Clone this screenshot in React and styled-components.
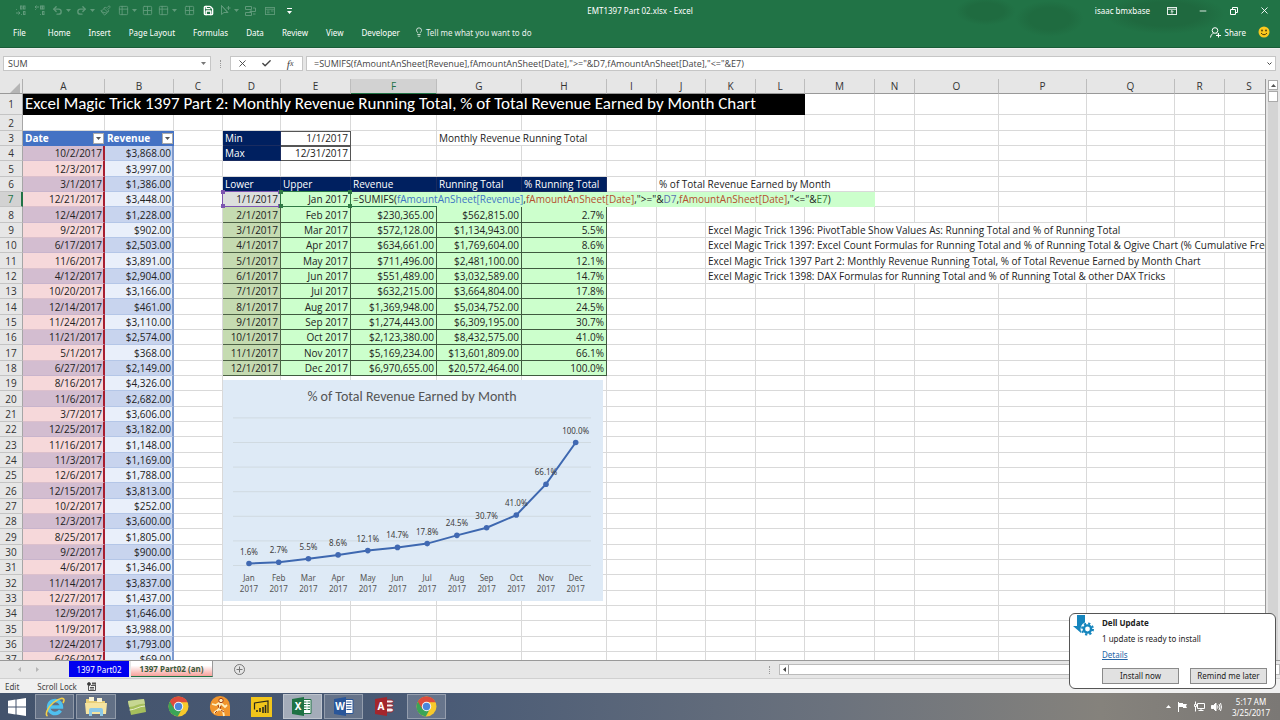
import React from 'react';
import styled, { createGlobalStyle } from 'styled-components';
import {
  Undo2,
  Redo2,
  Paintbrush,
  Table2,
  Grid2X2,
  Save,
  Lightbulb,
  X,
  Check,
  Minus,
} from 'lucide-react';

const COLUMNS = [
  ['A', 82],
  ['B', 69],
  ['C', 49],
  ['D', 58],
  ['E', 70],
  ['F', 86],
  ['G', 85],
  ['H', 85],
  ['I', 50],
  ['J', 49],
  ['K', 50],
  ['L', 49],
  ['M', 70],
  ['N', 40],
  ['O', 84],
  ['P', 88],
  ['Q', 88],
  ['R', 50],
  ['S', null],
];

// sales table in A4:B37
const SALES = [
  ['10/2/2017', '$3,868.00'],
  ['12/3/2017', '$3,997.00'],
  ['3/1/2017', '$1,386.00'],
  ['12/21/2017', '$3,448.00'],
  ['12/4/2017', '$1,228.00'],
  ['9/2/2017', '$902.00'],
  ['6/17/2017', '$2,503.00'],
  ['11/6/2017', '$3,891.00'],
  ['4/12/2017', '$2,904.00'],
  ['10/20/2017', '$3,166.00'],
  ['12/14/2017', '$461.00'],
  ['11/24/2017', '$3,110.00'],
  ['11/21/2017', '$2,574.00'],
  ['5/1/2017', '$368.00'],
  ['6/27/2017', '$2,149.00'],
  ['8/16/2017', '$4,326.00'],
  ['11/6/2017', '$2,682.00'],
  ['3/7/2017', '$3,606.00'],
  ['12/25/2017', '$3,182.00'],
  ['11/16/2017', '$1,148.00'],
  ['11/3/2017', '$1,169.00'],
  ['12/6/2017', '$1,788.00'],
  ['12/15/2017', '$3,813.00'],
  ['10/2/2017', '$252.00'],
  ['12/3/2017', '$3,600.00'],
  ['8/25/2017', '$1,805.00'],
  ['9/2/2017', '$900.00'],
  ['4/6/2017', '$1,346.00'],
  ['11/14/2017', '$3,837.00'],
  ['12/27/2017', '$1,437.00'],
  ['12/9/2017', '$1,646.00'],
  ['11/9/2017', '$3,988.00'],
  ['12/24/2017', '$1,793.00'],
  ['6/26/2017', '$69.00'],
];

// monthly report in D8:H18
const REPORT = [
  ['2/1/2017', 'Feb 2017', '$230,365.00', '$562,815.00', '2.7%'],
  ['3/1/2017', 'Mar 2017', '$572,128.00', '$1,134,943.00', '5.5%'],
  ['4/1/2017', 'Apr 2017', '$634,661.00', '$1,769,604.00', '8.6%'],
  ['5/1/2017', 'May 2017', '$711,496.00', '$2,481,100.00', '12.1%'],
  ['6/1/2017', 'Jun 2017', '$551,489.00', '$3,032,589.00', '14.7%'],
  ['7/1/2017', 'Jul 2017', '$632,215.00', '$3,664,804.00', '17.8%'],
  ['8/1/2017', 'Aug 2017', '$1,369,948.00', '$5,034,752.00', '24.5%'],
  ['9/1/2017', 'Sep 2017', '$1,274,443.00', '$6,309,195.00', '30.7%'],
  ['10/1/2017', 'Oct 2017', '$2,123,380.00', '$8,432,575.00', '41.0%'],
  ['11/1/2017', 'Nov 2017', '$5,169,234.00', '$13,601,809.00', '66.1%'],
  ['12/1/2017', 'Dec 2017', '$6,970,655.00', '$20,572,464.00', '100.0%'],
];

const CHART_DATA = [
  ['Jan', 1.6],
  ['Feb', 2.7],
  ['Mar', 5.5],
  ['Apr', 8.6],
  ['May', 12.1],
  ['Jun', 14.7],
  ['Jul', 17.8],
  ['Aug', 24.5],
  ['Sep', 30.7],
  ['Oct', 41.0],
  ['Nov', 66.1],
  ['Dec', 100.0],
];

const NOTES = {
  9: [
    'Excel Magic Trick 1396: PivotTable Show Values As: Running Total and % of Running Total',
    7,
  ],
  10: [
    'Excel Magic Trick 1397: Excel Count Formulas for Running Total and % of Running Total & Ogive Chart (% Cumulative Frequency)',
    9,
  ],
  11: [
    'Excel Magic Trick 1397 Part 2: Monthly Revenue Running Total, % of Total Revenue Earned by Month Chart',
    8,
  ],
  12: [
    'Excel Magic Trick 1398: DAX Formulas for Running Total and % of Running Total & other DAX Tricks',
    7,
  ],
};

const FORMULA =
  '=SUMIFS(fAmountAnSheet[Revenue],fAmountAnSheet[Date],">="&D7,fAmountAnSheet[Date],"<="&E7)';

const Formula = () => (
  <>
    =SUMIFS(<Ref color="#3f76c4">fAmountAnSheet[Revenue]</Ref>,
    <Ref color="#b5502f">fAmountAnSheet[Date]</Ref>,"&gt;="&amp;
    <Ref color="#5a6fb0">D7</Ref>,
    <Ref color="#b5502f">fAmountAnSheet[Date]</Ref>,"&lt;="&amp;
    <Ref color="#3b7d3b">E7</Ref>)
  </>
);

// returns the filled cells of a row, keyed by column letter
const getCells = n => {
  const cells = {};

  if (n === 1) {
    cells.A = {
      kind: 'title',
      span: 12,
      text: 'Excel Magic Trick 1397 Part 2: Monthly Revenue Running Total, % of Total Revenue Earned by Month Chart',
    };
  }
  if (n === 3) {
    cells.A = { kind: 'tableHead', text: 'Date', filter: true };
    cells.B = { kind: 'tableHead', text: 'Revenue', filter: true };
    cells.D = { kind: 'navy', text: 'Min' };
    cells.E = { kind: 'boxed', text: '1/1/2017' };
    cells.G = { text: 'Monthly Revenue Running Total', span: 2 };
  }
  if (n === 4) {
    cells.D = { kind: 'navy', text: 'Max' };
    cells.E = { kind: 'boxed', text: '12/31/2017' };
  }
  if (n > 3) {
    const [date, revenue] = SALES[n - 4];
    cells.A = { kind: n % 2 ? 'date' : 'dateBand', text: date };
    cells.B = { kind: n % 2 ? 'revenue' : 'revenueBand', text: revenue };
  }
  if (n === 6) {
    ['Lower', 'Upper', 'Revenue', 'Running Total', '% Running Total'].forEach(
      (text, i) => {
        cells['DEFGH'[i]] = { kind: 'navy', text };
      }
    );
    cells.J = { text: '% of Total Revenue Earned by Month', span: 4 };
  }
  if (n === 7) {
    cells.D = { kind: 'lower', text: '1/1/2017', range: '#7d55b0' };
    cells.E = { kind: 'green', text: 'Jan 2017', range: '#2f7a45' };
    cells.F = { kind: 'formula', text: <Formula />, span: 8, editing: true };
  }
  if (n > 7 && n < 19) {
    REPORT[n - 8].forEach((text, i) => {
      cells['DEFGH'[i]] = { kind: i === 0 ? 'lowerShade' : 'green', text };
    });
  }
  if (NOTES[n]) {
    cells.K = { text: NOTES[n][0], span: NOTES[n][1] };
  }
  return cells;
};

const SheetRow = ({ n }) => {
  const cells = getCells(n);
  const list = [];
  let i = 0;
  while (i < COLUMNS.length) {
    const letter = COLUMNS[i][0];
    const cell = cells[letter] || {};
    list.push(
      <Cell key={letter} kind={cell.kind} colSpan={cell.span || 1}>
        {cell.filter ? (
          <HeadLabel>
            {cell.text}
            <FilterButton aria-label={`Filter ${cell.text}`}>
              <Caret color="#555" />
            </FilterButton>
          </HeadLabel>
        ) : (
          cell.text
        )}
        {cell.range && (
          <Range color={cell.range}>
            <i />
            <i />
            <i />
            <i />
          </Range>
        )}
        {cell.editing && <EditFrame />}
      </Cell>
    );
    i += cell.span || 1;
  }
  return (
    <Row n={n}>
      <RowHead scope="row" active={n === 7}>
        {n}
      </RowHead>
      {list}
    </Row>
  );
};

const Chart = () => {
  const x = i => 26 + i * 29.7;
  const y = v => 185.5 - v * 1.23;
  return (
    <ChartBox>
      <svg width="380" height="221" role="img" aria-label="Revenue chart">
        <ChartTitle x="189" y="21">
          % of Total Revenue Earned by Month
        </ChartTitle>
        {[0, 20, 40, 60, 80, 100, 120].map(v => (
          <line key={v} x1="10" x2="368" y1={y(v)} y2={y(v)} stroke="#d0dae1" />
        ))}
        <polyline
          points={CHART_DATA.map((d, i) => `${x(i)},${y(d[1])}`).join(' ')}
          fill="none"
          stroke="#3e68b0"
          strokeWidth="2"
        />
        {CHART_DATA.map(([month, value], i) => (
          <g key={month}>
            <circle cx={x(i)} cy={y(value)} r="2.8" fill="#4169b2" />
            <ValueLabel x={x(i)} y={y(value) - 9}>
              {value.toFixed(1)}%
            </ValueLabel>
            <AxisLabel x={x(i)} y="201">
              {month}
            </AxisLabel>
            <AxisLabel x={x(i)} y="212">
              2017
            </AxisLabel>
          </g>
        ))}
      </svg>
    </ChartBox>
  );
};

const Caret = ({ color = 'currentColor' }) => (
  <svg width="5" height="3" viewBox="0 0 5 3">
    <path d="M0 0h5L2.5 3z" fill={color} />
  </svg>
);

const DecimalIcon = ({ flip }) => (
  <svg width="11" height="11" viewBox="0 0 11 11" fill="none" stroke="#fff">
    <path d={flip ? 'M1 2h4M2.5 .5L1 2l1.5 1.5' : 'M1 8h4M3.5 6.5L5 8L3.5 9.5'} />
    <rect x={flip ? 6.5 : 5.5} y="1" width="1.5" height="3" />
    <rect x="8.5" y="1" width="1.5" height="3" />
    <rect x="8.5" y="6.5" width="1.5" height="3" />
    <path d="M1 4.5h.8M6 9.5h.8" />
  </svg>
);

const WindowIcon = ({ arrow }) => (
  <svg width="10" height="8" viewBox="0 0 11 9" fill="none" stroke="#fff">
    <rect x=".5" y=".5" width="10" height="8" />
    <path
      d={
        arrow
          ? 'M.5 2.5h10M5.5 7.5V4M4 5.5L5.5 4L7 5.5'
          : 'M.5 2.5h10M2 4.5h3M2 6.5h3M6.5 4.5h3'
      }
    />
  </svg>
);

const ListIcon = () => (
  <svg width="11" height="10" viewBox="0 0 11 10" fill="none" stroke="#fff">
    <path d="M.5 .5h6v3h-6zM.5 6.5h6v3h-6zM8 2h2.5v3.5H5M6.5 4L5 5.5L6.5 7M8 8h2.5" />
  </svg>
);

const PointerIcon = () => (
  <svg width="11" height="11" viewBox="0 0 11 11" fill="none" stroke="#fff">
    <path d="M1.5 .5v9l2.5-2h4zM1.5 .5l6 7M8.5 1v4M6.5 3h4" />
  </svg>
);

const ShareIcon = () => (
  <svg width="11" height="11" viewBox="0 0 11 11" fill="none" stroke="#fff">
    <circle cx="5" cy="3.5" r="2.8" />
    <path d="M.5 10.5C1 8 2 6.8 3.5 6.2M6.5 6.2L7.5 7M8.5 6v4.5M6 8.5h5" />
  </svg>
);

const QUICK = [
  ['Increase decimal', 20, <DecimalIcon />],
  ['Decrease decimal', 18, <DecimalIcon flip />],
  ['Undo', 26, <Undo2 size={11} strokeWidth={3} />, true],
  ['Redo', 22, <Redo2 size={11} strokeWidth={3} />, true],
  ['Format painter', 18, <Paintbrush size={11} />],
  ['Insert table', 26, <Table2 size={11} />, true],
  ['Borders', 15, <Grid2X2 size={11} />],
  ['Format table', 25, <Table2 size={11} />, true],
  ['All borders', 18, <Grid2X2 size={11} />],
  ['Save', 20, <Save size={11} strokeWidth={3} />, false, true],
  ['Select', 23, <PointerIcon />, true],
  ['Outline', 19, <ListIcon />],
  ['Form', 20, <WindowIcon />],
];

const TABS = [
  'Home',
  'Insert',
  'Page Layout',
  'Formulas',
  'Data',
  'Review',
  'View',
  'Developer',
];

const ChromeIcon = () => (
  <svg width="21" height="21" viewBox="0 0 20 20">
    <circle cx="10" cy="10" r="9.5" fill="#f7c92c" />
    <path d="M10 10L1.8 5.2A9.5 9.5 0 0 0 9.3 19.5L13.5 12z" fill="#3ba457" />
    <path d="M1.8 5.2L6.2 12.5L10 6h8.6A9.5 9.5 0 0 0 1.8 5.2" fill="#dd4b3c" />
    <circle cx="10" cy="10" r="4.5" fill="#f4f6f8" />
    <circle cx="10" cy="10" r="3.5" fill="#4a86dc" />
  </svg>
);

const OfficeIcon = ({ color, letter, kind }) => (
  <svg width="20" height="19" viewBox="0 0 20 19">
    {kind === 'access' ? (
      <path
        d="M10 3h6c3 0 3 3 0 3h-6zM10 7h6c3 0 3 3 0 3h-6zM10 11h6c3 0 3 4 0 4h-6z"
        fill="#f2f2f2"
        stroke={color}
      />
    ) : (
      <>
        <path d="M9 2.5h10v14H9z" fill="#fff" stroke={color} />
        <path
          d={
            kind === 'excel'
              ? 'M12 5h2.5M15.5 5H18M12 7.5h2.5M15.5 7.5H18M12 10h2.5M15.5 10H18M12 12.5h2.5M15.5 12.5H18'
              : 'M12.5 5h5M12.5 7.5h5M12.5 10h5M12.5 12.5h5'
          }
          stroke={color}
        />
      </>
    )}
    <path d="M0 2L12 0v19L0 17z" fill={color} />
    <text
      x="6"
      y="13"
      textAnchor="middle"
      fill="#fff"
      fontSize="10"
      fontWeight="700"
    >
      {letter}
    </text>
  </svg>
);

const IeIcon = () => (
  <svg width="22" height="22" viewBox="0 0 22 22" fill="none">
    <path d="M16.5 14.5A6.5 6.5 0 1 1 17.5 11H5.5" stroke="#4fc0ee" strokeWidth="3.4" />
    <path d="M3.5 20C.5 18.5 4 11 9.5 6.5S20.5 1 20 4.5c-.2 1-.6 1.8-1 2.5" stroke="#f2cf4a" strokeWidth="1.6" />
  </svg>
);

const FolderIcon = () => (
  <svg width="24" height="21" viewBox="0 0 24 21">
    <path d="M2 3h7l1 2h11v12H2z" fill="#e8cf78" />
    <path d="M5 1h5v4H5zM13 2h5v4h-5z" fill="#f8f3d6" />
    <path d="M1 7h22l-1 11H2z" fill="#f6e4a0" />
    <path d="M5 20v-6q0-2 2-2h10q2 0 2 2v6h-3v-4H8v4z" fill="#8cc9e8" />
  </svg>
);

const CamtasiaIcon = () => (
  <svg width="20" height="18" viewBox="0 0 20 18">
    <path d="M1 3L17 1l2 13L4 17z" fill="#a6bf5c" />
    <path d="M1 3L17 1l1 5C12 5 8 9 2 9z" fill="#c7d792" />
    <path d="M2.5 12C8 12 12 8 18 8" stroke="#e5edc9" fill="none" />
  </svg>
);

const FigureIcon = () => (
  <svg width="22" height="21" viewBox="0 0 22 21">
    <path d="M1 10a9.5 9.5 0 0 1 20 0v10H9A9 9 0 0 1 1 10z" fill="#f0952d" />
    <path
      d="M3 8l4 1 3-2 3 1 3 3 2-2M11 8l-1 5-5 4M10 13l4 2 1 5"
      stroke="#fdf0c0"
      strokeWidth="1.8"
      fill="none"
    />
    <circle cx="12" cy="4.5" r="2.2" fill="#fdf0c0" stroke="#a23c15" />
    <path d="M9 9l1 3M12 10l-1 3M12 14l3 2M8 15l-2 2" stroke="#a23c15" />
  </svg>
);

const PowerBiIcon = () => (
  <svg width="21" height="20" viewBox="0 0 21 20">
    <path d="M0 0h21v20H0z" fill="#f1c51b" />
    <path d="M3.5 12.5V6L17 4v12" fill="none" stroke="#2b2a1d" strokeWidth="1.2" />
    <path d="M6 13v2M9 11v4M12 10v6M14.5 8v8" stroke="#2b2a1d" strokeWidth="1.6" />
  </svg>
);

const TASKS = [
  ['Internet Explorer', <IeIcon />, 'open'],
  ['File Explorer', <FolderIcon />, 'open'],
  ['Camtasia', <CamtasiaIcon />],
  ['Chrome', <ChromeIcon />],
  ['Runner', <FigureIcon />],
  ['Power BI', <PowerBiIcon />],
  ['Excel', <OfficeIcon color="#1f7244" letter="X" kind="excel" />, 'active'],
  ['Word', <OfficeIcon color="#2a5699" letter="W" kind="word" />, 'open'],
  ['Access', <OfficeIcon color="#a4262c" letter="A" kind="access" />],
  ['Chrome window', <ChromeIcon />, 'open'],
];

const App = () => {
  return (
    <Page>
      <GlobalStyle />
      <Ribbon>
        <TitleBar>
          <QuickAccess>
            {QUICK.map(([label, width, icon, caret, bright]) => (
              <QuickButton
                key={label}
                aria-label={label}
                width={width}
                bright={bright}
              >
                {icon}
                {caret && <Caret />}
              </QuickButton>
            ))}
            <QuickButton aria-label="Customize" width={18} bright>
              <svg width="5" height="6" viewBox="0 0 5 6" fill="#fff">
                <path d="M0 0h5v1H0zM0 3h5L2.5 6z" />
              </svg>
            </QuickButton>
          </QuickAccess>
          <span>EMT1397 Part 02.xlsx - Excel</span>
          <WindowTools>
            <User>isaac bmxbase</User>
            <WindowButton aria-label="Ribbon display options">
              <WindowIcon arrow />
            </WindowButton>
            <WindowButton aria-label="Minimize">
              <Minus size={10} />
            </WindowButton>
            <WindowButton aria-label="Restore">
              <svg width="8" height="8" viewBox="0 0 8 8" fill="none" stroke="#fff">
                <path d="M.5 2.5h5v5h-5zM2.5 2.5v-2h5v5h-2" />
              </svg>
            </WindowButton>
            <WindowButton aria-label="Close">
              <X size={11} />
            </WindowButton>
          </WindowTools>
        </TitleBar>
        <Menu>
          <FileTab>File</FileTab>
          {TABS.map(tab => (
            <MenuTab key={tab}>{tab}</MenuTab>
          ))}
          <TellMe>
            <Lightbulb size={10} />
            Tell me what you want to do
          </TellMe>
          <Share>
            <ShareIcon />
            Share
          </Share>
          <Smiley aria-label="Feedback">
            <svg width="12" height="12" viewBox="0 0 12 12">
              <circle cx="6" cy="6" r="5.5" fill="#fbc81e" />
              <circle cx="4" cy="4.5" r=".9" fill="#4c3a08" />
              <circle cx="8" cy="4.5" r=".9" fill="#4c3a08" />
              <path d="M3 7q3 3.5 6 0" fill="none" stroke="#4c3a08" />
            </svg>
          </Smiley>
        </Menu>
      </Ribbon>

      <FormulaBar>
        <NameBox>
          <NameInput aria-label="Name box" defaultValue="SUM" />
          <Caret color="#777" />
        </NameBox>
        <Dots />
        <FormulaTools>
          <FormulaButton aria-label="Cancel">
            <X size={11} />
          </FormulaButton>
          <FormulaButton aria-label="Enter">
            <Check size={11} strokeWidth={3} />
          </FormulaButton>
          <FormulaButton aria-label="Insert function">
            f<small>x</small>
          </FormulaButton>
        </FormulaTools>
        <FormulaField>
          <FormulaInput aria-label="Formula" defaultValue={FORMULA} />
          <svg width="5" height="4" viewBox="0 0 5 4" fill="none" stroke="#444">
            <path d="M.5 .5l2 2l2-2" />
          </svg>
        </FormulaField>
      </FormulaBar>

      <Workspace>
        <SheetArea>
          <Sheet>
            <colgroup>
              <Col width={23} />
              {COLUMNS.map(([letter, width]) => (
                <Col key={letter} width={width} />
              ))}
            </colgroup>
            <thead>
              <tr>
                <Corner aria-label="Select all">
                  <svg width="10" height="10" viewBox="0 0 10 10">
                    <path d="M10 0v10H0z" fill="#b5b5b5" />
                  </svg>
                </Corner>
                {COLUMNS.map(([letter]) => (
                  <ColHead key={letter} scope="col" active={letter === 'F'}>
                    {letter}
                  </ColHead>
                ))}
              </tr>
            </thead>
            <tbody>
              {Array.from({ length: 37 }, (_, i) => (
                <SheetRow key={i} n={i + 1} />
              ))}
            </tbody>
          </Sheet>
          <Chart />
        </SheetArea>
        <VScroll>
          <ScrollButton aria-label="Scroll up">
            <svg width="5" height="3" viewBox="0 0 5 3">
              <path d="M0 3h5L2.5 0z" fill="#555" />
            </svg>
          </ScrollButton>
          <ScrollThumb />
        </VScroll>
      </Workspace>

      <SheetTabs>
        <TabArrows>
          <svg width="3" height="5" viewBox="0 0 3 5" fill="#b5b5b5">
            <path d="M3 0v5L0 2.5z" />
          </svg>
          <svg width="3" height="5" viewBox="0 0 3 5" fill="#b5b5b5">
            <path d="M0 0v5l3-2.5z" />
          </svg>
        </TabArrows>
        <BlueTab>1397 Part02</BlueTab>
        <ActiveTab>1397 Part02 (an)</ActiveTab>
        <AddTab aria-label="New sheet">
          <svg width="11" height="11" viewBox="0 0 11 11" fill="none" stroke="#777">
            <circle cx="5.5" cy="5.5" r="5" />
            <path d="M5.5 2.5v6M2.5 5.5h6" />
          </svg>
        </AddTab>
        <HScroll>
          <Dots />
          <HTrack>
            <HButton aria-label="Scroll left">
              <svg width="3" height="5" viewBox="0 0 3 5">
                <path d="M3 0v5L0 2.5z" fill="#444" />
              </svg>
            </HButton>
          </HTrack>
        </HScroll>
      </SheetTabs>

      <StatusBar>
        <span>Edit</span>
        <span>Scroll Lock</span>
        <StatusIcon width="10" height="9" viewBox="0 0 10 9">
          <path d="M1.5 2.5v6h7v-6M4 3.5h4.5M3 5.5h4M3 7h4" />
          <circle cx="2" cy="2" r="1.5" fill="#333" />
          <path d="M5 1.5h4" strokeWidth="2" />
        </StatusIcon>
      </StatusBar>

      <Taskbar>
        <StartButton aria-label="Start">
          <svg width="18" height="18" viewBox="0 0 18 18" fill="#fff">
            <path d="M0 2.8L7.5 1.6v6.9H0zM8.5 1.5L18 0v8.5H8.5zM0 9.5h7.5v6.9L0 15.2zM8.5 9.5H18V18l-9.5-1.5z" />
          </svg>
        </StartButton>
        <Tasks>
          {TASKS.map(([label, icon, state]) => (
            <TaskButton key={label} aria-label={label} state={state}>
              {icon}
            </TaskButton>
          ))}
        </Tasks>
        <Tray>
          <svg width="5" height="3" viewBox="0 0 5 3">
            <path d="M0 3h5L2.5 0z" fill="#fff" />
          </svg>
          <svg width="11" height="10" viewBox="0 0 11 10" fill="#fff">
            <path d="M1 0h1v10H1zM2 1h4v1h4L9 4l1 2H6V5H2z" />
          </svg>
          <svg width="11" height="11" viewBox="0 0 11 11" fill="none" stroke="#fff">
            <path d="M3.5 2.5h7v5h-7zM7 7.5v2M4.5 9.5h5M1.5 .5v3M.5 3.5h2v2h-2zM1.5 5.5v5" />
          </svg>
          <svg width="11" height="10" viewBox="0 0 11 10" fill="none" stroke="#fff">
            <path d="M.5 3.5h2L5 1v8L2.5 6.5h-2z" fill="#fff" />
            <path d="M6.5 3.5q1 1.5 0 3M8 2q2 3 0 6M9.5 1q2 4 0 8" />
          </svg>
          <Clock>
            <span>5:17 AM</span>
            <span>3/25/2017</span>
          </Clock>
        </Tray>
      </Taskbar>

      <Popup role="dialog" aria-label="Dell Update">
        <svg width="22" height="21" viewBox="0 0 22 21">
          <path d="M4 0h8v9c-3 2-3 5-2 8L8 18L0 11h4z" fill="#1585bd" />
          <circle cx="14.5" cy="14" r="7" fill="#fff" />
          <circle cx="14.5" cy="14" r="3.6" fill="none" stroke="#1585bd" strokeWidth="2.4" />
          <circle
            cx="14.5"
            cy="14"
            r="5.5"
            fill="none"
            stroke="#1585bd"
            strokeWidth="2"
            strokeDasharray="2.2 2.12"
          />
        </svg>
        <PopupBody>
          <PopupTitle>Dell Update</PopupTitle>
          <p>1 update is ready to install</p>
          <PopupLink href="#details">Details</PopupLink>
          <PopupActions>
            <PopupButton>Install now</PopupButton>
            <PopupButton>Remind me later</PopupButton>
          </PopupActions>
        </PopupBody>
      </Popup>
    </Page>
  );
};

const GlobalStyle = createGlobalStyle`
  * {
    box-sizing: border-box;
    margin: 0;
    padding: 0;
  }

  body {
    font-family: 'Noto Sans', 'Open Sans', sans-serif;
    font-size: 8px;
    color: #222;
  }

  button {
    font: inherit;
    color: inherit;
    background: none;
    border: none;
  }

  input {
    font: inherit;
    color: inherit;
    border: none;
    outline: none;
    background: none;
  }

  svg {
    flex-shrink: 0;
  }
`;

const Page = styled.div`
  position: relative;
  display: flex;
  flex-direction: column;
  height: 100vh;
  overflow: hidden;
  background-color: #e6e6e6;
`;

const Ribbon = styled.header`
  color: #fff;
  padding-bottom: 4px;
  border-bottom: 1px solid #1a5c38;
  background:
    radial-gradient(ellipse 30px 14px at 77% 24%, #1f6b40 60%, transparent),
    radial-gradient(ellipse 34px 18px at 82% 40%, #1f6b40 60%, transparent),
    radial-gradient(ellipse 60px 20px at 91% 30%, #1f693f 60%, transparent),
    #217346;
`;

const TitleBar = styled.div`
  display: grid;
  grid-template-columns: 1fr auto 1fr;
  align-items: center;
  height: 21px;
`;

const QuickAccess = styled.div`
  display: flex;
  padding-left: 10px;
`;

const QuickButton = styled.button`
  display: flex;
  align-items: center;
  justify-content: center;
  gap: 3px;
  width: ${props => props.width}px;
  height: 16px;
  color: #fff;
  opacity: ${props => (props.bright ? 1 : 0.28)};
`;

const WindowTools = styled.div`
  display: flex;
  align-items: center;
  justify-content: flex-end;
`;

const User = styled.span`
  margin-right: 6px;
`;

const WindowButton = styled.button`
  display: flex;
  align-items: center;
  justify-content: center;
  width: 31px;
  height: 18px;
`;

const Menu = styled.nav`
  display: flex;
  align-items: center;
  gap: 18px;
  height: 22px;
  padding: 0 10px 0 13px;
`;

const MenuTab = styled.button`
  white-space: nowrap;
`;

const FileTab = styled(MenuTab)`
  margin-right: 4px;
`;

const TellMe = styled(MenuTab)`
  display: flex;
  align-items: center;
  gap: 2px;
  margin-left: -4px;
  opacity: 0.9;
`;

const Share = styled(MenuTab)`
  display: flex;
  align-items: center;
  gap: 4px;
  margin-left: auto;
`;

const Smiley = styled.button`
  display: flex;
  margin-left: -6px;
`;

const FormulaBar = styled.div`
  display: flex;
  height: 31px;
  padding: 7px 4px 8px 3px;
  border-top: 1px solid #efefef;
  font-family: 'Open Sans', 'Noto Sans', sans-serif;
  font-size: 9px;
  color: #444;
`;

const NameBox = styled.div`
  display: flex;
  align-items: center;
  justify-content: space-between;
  width: 208px;
  padding: 0 4px;
  background-color: #fff;
  border: 1px solid #c6c6c6;
`;

const NameInput = styled.input`
  width: 180px;
`;

const Dots = styled.span`
  align-self: center;
  height: 8px;
  margin: 0 9px;
  border-left: 1px dotted #999;
`;

const FormulaTools = styled.div`
  display: flex;
  width: 73px;
  margin-right: 3px;
  background-color: #fff;
  border: 1px solid #c6c6c6;
`;

const FormulaButton = styled.button`
  display: flex;
  flex: 1;
  align-items: center;
  justify-content: center;
  font-family: 'Liberation Serif', serif;
  font-size: 11px;
  font-style: italic;

  small {
    font-size: 8px;
  }
`;

const FormulaField = styled.div`
  display: flex;
  flex: 1;
  align-items: center;
  padding: 0 3px 0 7px;
  background-color: #fff;
  border: 1px solid #c6c6c6;
`;

const FormulaInput = styled.input`
  flex: 1;
`;

const Workspace = styled.main`
  display: flex;
  flex: 1;
  min-height: 0;
`;

const SheetArea = styled.div`
  position: relative;
  flex: 1;
  min-width: 0;
  overflow: hidden;
  border-right: 1px solid #999;
`;

// the last column runs on past the visible area
const Sheet = styled.table`
  width: calc(100% + 9px);
  table-layout: fixed;
  border-collapse: separate;
  border-spacing: 0;
  font-family: 'Open Sans', 'Noto Sans', sans-serif;
  font-size: 10px;
  line-height: 14px;
`;

const Col = styled.col`
  width: ${props => (props.width ? `${props.width}px` : 'auto')};
`;

const Corner = styled.th`
  height: 15px;
  padding-right: 2px;
  text-align: right;
  line-height: 0;
  vertical-align: bottom;
  border-right: 1px solid #b0b0b0;
  border-bottom: 1px solid #999;
`;

const ColHead = styled.th`
  height: 15px;
  font-weight: 400;
  color: ${props => (props.active ? '#217346' : '#333')};
  background-color: ${props => (props.active ? '#d2d2d2' : '#e6e6e6')};
  border-right: 1px solid #bdbdbd;
  border-bottom: 1px solid ${props => (props.active ? '#217346' : '#999')};
`;

// rows are 16/15/15 px in turn, the title row is taller
const rowHeight = n => {
  if (n === 1) return 21;
  return (n - 2) % 3 === 0 ? 16 : 15;
};

const Row = styled.tr`
  height: ${props => rowHeight(props.n)}px;
`;

const RowHead = styled.th`
  font-weight: 400;
  color: ${props => (props.active ? '#217346' : '#333')};
  background-color: ${props => (props.active ? '#d2d2d2' : '#e6e6e6')};
  border-right: ${props =>
    props.active ? '2px solid #217346' : '1px solid #a6a6a6'};
  border-bottom: 1px solid #c4c4c4;
`;

const gridLine = '#d9d9d9';

const kinds = {
  title: `
    font-family: Carlito, Lato, sans-serif;
    font-size: 17px;
    line-height: 20px;
    color: #fff;
    background-color: #000;
    border-color: #000;
  `,
  tableHead: `
    padding-right: 0;
    font-weight: 700;
    color: #fff;
    background-color: #4472c4;
    border-color: #4472c4;
  `,
  navy: `
    color: #fff;
    background-color: #002060;
    border-color: #1a2c60;
  `,
  boxed: `
    text-align: right;
    border-color: #555;
    box-shadow: inset 0 1px #555;
  `,
  date: `
    padding-right: 1px;
    text-align: right;
    background-color: #f6d8da;
    border-right: 2px solid #a81e30;
    border-bottom-color: #dcc0cc;
  `,
  dateBand: `
    padding-right: 1px;
    text-align: right;
    background-color: #d3bdd0;
    border-right: 2px solid #a81e30;
    border-bottom-color: #c8b4cc;
  `,
  revenue: `
    padding-right: 1px;
    text-align: right;
    background-color: #e9effa;
    border-right: 2px solid #7e9ace;
    border-bottom-color: #b4c6e7;
  `,
  revenueBand: `
    padding-right: 1px;
    text-align: right;
    background-color: #c8d4ee;
    border-right: 2px solid #7e9ace;
    border-bottom-color: #b4c6e7;
  `,
  lower: `
    position: relative;
    text-align: right;
    background-color: #dcdfdd;
  `,
  lowerShade: `
    text-align: right;
    background-color: #c5dbb1;
    border-color: #4d6145;
  `,
  green: `
    position: relative;
    text-align: right;
    background-color: #ccffcc;
    border-color: #3f5a3f;
  `,
  formula: `
    position: relative;
    color: #222;
    background-color: #ccffcc;
    border-color: #ccffcc;
  `,
};

const Cell = styled.td`
  padding: 0 2px;
  text-align: left;
  white-space: nowrap;
  background-color: #fff;
  border-right: 1px solid ${gridLine};
  border-bottom: 1px solid ${gridLine};
  ${props => kinds[props.kind]}
`;

const Ref = styled.span`
  color: ${props => props.color};
`;

const HeadLabel = styled.div`
  display: flex;
  align-items: center;
  justify-content: space-between;
`;

const FilterButton = styled.button`
  display: flex;
  align-items: center;
  justify-content: center;
  width: 11px;
  height: 11px;
  background-color: #fff;
  border: 1px solid #aaa;
`;

const Range = styled.span`
  position: absolute;
  z-index: 1;
  inset: -1px;
  border: 1px solid ${props => props.color};

  i {
    position: absolute;
    width: 4px;
    height: 4px;
    background-color: ${props => props.color};
  }

  i:nth-child(1) {
    top: -2px;
    left: -2px;
  }

  i:nth-child(2) {
    top: -2px;
    right: -2px;
  }

  i:nth-child(3) {
    bottom: -2px;
    left: -2px;
  }

  i:nth-child(4) {
    bottom: -2px;
    right: -2px;
  }
`;

// line under the cell being edited
const EditFrame = styled.span`
  position: absolute;
  left: 0;
  bottom: -1px;
  width: 86px;
  border-bottom: 1px solid #217346;
`;

// floats over the cells below the report
const ChartBox = styled.figure`
  position: absolute;
  top: 301px;
  left: 223px;
  background-color: #deeaf6;

  svg {
    display: block;
  }
`;

const ChartText = styled.text`
  font-size: 8px;
  fill: #555;
  text-anchor: middle;
`;

const ChartTitle = styled(ChartText)`
  font-family: Carlito, Lato, sans-serif;
  font-size: 14px;
`;

const ValueLabel = styled(ChartText)`
  fill: #404040;
`;

const AxisLabel = styled(ChartText)`
  fill: #555;
`;

const VScroll = styled.div`
  display: flex;
  flex-direction: column;
  width: 10px;
  margin: 1px 2px 0 2px;
  background-color: #d4d4d4;
`;

const ScrollButton = styled.button`
  display: flex;
  align-items: center;
  justify-content: center;
  height: 10px;
  background-color: #fff;
  border: 1px solid #aaa;
`;

const ScrollThumb = styled.div`
  height: 11px;
  margin-top: 1px;
  background-color: #fff;
  border: 1px solid #aaa;
`;

const SheetTabs = styled.div`
  display: flex;
  height: 19px;
  border-top: 1px solid #999;
  border-bottom: 1px solid #d0d0d0;
`;

const TabArrows = styled.div`
  display: flex;
  align-items: center;
  gap: 15px;
  width: 69px;
  padding-left: 18px;
`;

const SheetTab = styled.button`
  height: 16px;
  line-height: 15px;
  white-space: nowrap;
`;

const BlueTab = styled(SheetTab)`
  width: 60px;
  color: #fff;
  background-color: #0000f0;
`;

const ActiveTab = styled(SheetTab)`
  width: 82px;
  margin-left: 2px;
  font-weight: 700;
  color: #3b5b3b;
  background: linear-gradient(#fff 30%, #f7a09a);
  border-bottom: 1px solid #217346;
  border-right: 1px solid #999;
`;

const AddTab = styled.button`
  display: flex;
  align-items: center;
  margin-left: 21px;
`;

const HScroll = styled.div`
  display: flex;
  flex: 1;
  align-items: center;
  max-width: 520px;
  margin-left: auto;
`;

const HTrack = styled.div`
  display: flex;
  flex: 1;
  height: 11px;
  background-color: #fff;
  border: 1px solid #bbb;
`;

const HButton = styled.button`
  display: flex;
  align-items: center;
  justify-content: center;
  width: 9px;
  border-right: 1px solid #999;
`;

const StatusBar = styled.footer`
  display: flex;
  align-items: center;
  gap: 18px;
  height: 14px;
  padding: 0 5px;
  color: #444;
  background-color: #f0f0f0;
`;

const StatusIcon = styled.svg`
  margin-left: -8px;
  fill: none;
  stroke: #555;
`;

const Taskbar = styled.div`
  display: flex;
  height: 27px;
  background: linear-gradient(
    to right,
    #43536c,
    #4a5b76 35%,
    #6b727d 65%,
    #85827c 86%,
    #7b7875
  );
`;

const StartButton = styled.button`
  display: flex;
  align-items: center;
  justify-content: center;
  width: 34px;
`;

const Tasks = styled.div`
  display: grid;
  grid-template-columns: repeat(10, 1fr);
  width: 413px;
`;

const taskColors = {
  open: 'rgba(255, 255, 255, 0.16)',
  active: 'rgba(255, 255, 255, 0.5)',
};

const TaskButton = styled.button`
  display: flex;
  align-items: center;
  justify-content: center;
  margin: 1px;
  background-color: ${props => taskColors[props.state] || 'transparent'};
  border: 1px solid
    ${props => (props.state ? 'rgba(255, 255, 255, 0.3)' : 'transparent')};
`;

const Tray = styled.div`
  display: flex;
  align-items: center;
  gap: 6px;
  margin-left: auto;
  padding-right: 10px;
  color: #fff;
`;

const Clock = styled.div`
  display: flex;
  flex-direction: column;
  align-items: center;
  margin-left: 4px;
  line-height: 11px;
`;

// notification on top of the workbook
const Popup = styled.section`
  position: absolute;
  right: 4px;
  bottom: 31px;
  display: flex;
  gap: 7px;
  width: 207px;
  padding: 1px 8px 4px 3px;
  background-color: #fff;
  border: 1px solid #555;
  border-radius: 6px;
`;

const PopupBody = styled.div`
  flex: 1;
  line-height: 16px;
`;

const PopupTitle = styled.h2`
  font-size: 8px;
`;

const PopupLink = styled.a`
  color: #2566a8;
`;

const PopupActions = styled.div`
  display: flex;
  gap: 11px;
  margin-top: 5px;
`;

const PopupButton = styled.button`
  flex: 1;
  height: 16px;
  line-height: 14px;
  white-space: nowrap;
  background-color: #e1e1e1;
  border: 1px solid #8a8a8a;
`;

export default App;
